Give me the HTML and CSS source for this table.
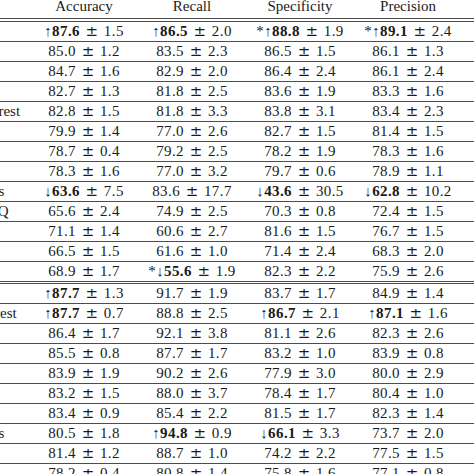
FILE: index.html
```html
<!DOCTYPE html>
<html lang="en">
<head>
<meta charset="utf-8">
<title>Results table</title>
<link rel="stylesheet" href="styles.css">
</head>
<body>
<div class="tbl">
  <div class="row head"><div class="lab"></div><div class="c">Accuracy</div><div class="c">Recall</div><div class="c">Specificity</div><div class="c">Precision</div><div></div></div>

  <div class="row"><div class="lab"></div><div class="c">↑<b>87.6</b> <span class="pm">±</span> 1.5</div><div class="c">↑<b>86.5</b> <span class="pm">±</span> 2.0</div><div class="c">*↑<b>88.8</b> <span class="pm">±</span> 1.9</div><div class="c">*↑<b>89.1</b> <span class="pm">±</span> 2.4</div><div></div></div>
  <div class="row"><div class="lab"></div><div class="c">85.0 <span class="pm">±</span> 1.2</div><div class="c">83.5 <span class="pm">±</span> 2.3</div><div class="c">86.5 <span class="pm">±</span> 1.5</div><div class="c">86.1 <span class="pm">±</span> 1.3</div><div></div></div>
  <div class="row"><div class="lab"></div><div class="c">84.7 <span class="pm">±</span> 1.6</div><div class="c">82.9 <span class="pm">±</span> 2.0</div><div class="c">86.4 <span class="pm">±</span> 2.4</div><div class="c">86.1 <span class="pm">±</span> 2.4</div><div></div></div>
  <div class="row"><div class="lab"></div><div class="c">82.7 <span class="pm">±</span> 1.3</div><div class="c">81.8 <span class="pm">±</span> 2.5</div><div class="c">83.6 <span class="pm">±</span> 1.9</div><div class="c">83.3 <span class="pm">±</span> 1.6</div><div></div></div>
  <div class="row"><div class="lab">Random Forest</div><div class="c">82.8 <span class="pm">±</span> 1.5</div><div class="c">81.8 <span class="pm">±</span> 3.3</div><div class="c">83.8 <span class="pm">±</span> 3.1</div><div class="c">83.4 <span class="pm">±</span> 2.3</div><div></div></div>
  <div class="row"><div class="lab"></div><div class="c">79.9 <span class="pm">±</span> 1.4</div><div class="c">77.0 <span class="pm">±</span> 2.6</div><div class="c">82.7 <span class="pm">±</span> 1.5</div><div class="c">81.4 <span class="pm">±</span> 1.5</div><div></div></div>
  <div class="row"><div class="lab"></div><div class="c">78.7 <span class="pm">±</span> 0.4</div><div class="c">79.2 <span class="pm">±</span> 2.5</div><div class="c">78.2 <span class="pm">±</span> 1.9</div><div class="c">78.3 <span class="pm">±</span> 1.6</div><div></div></div>
  <div class="row"><div class="lab"></div><div class="c">78.3 <span class="pm">±</span> 1.6</div><div class="c">77.0 <span class="pm">±</span> 3.2</div><div class="c">79.7 <span class="pm">±</span> 0.6</div><div class="c">78.9 <span class="pm">±</span> 1.1</div><div></div></div>
  <div class="row"><div class="lab">Naive Bayes</div><div class="c">↓<b>63.6</b> <span class="pm">±</span> 7.5</div><div class="c">83.6 <span class="pm">±</span> 17.7</div><div class="c">↓<b>43.6</b> <span class="pm">±</span> 30.5</div><div class="c">↓<b>62.8</b> <span class="pm">±</span> 10.2</div><div></div></div>
  <div class="row"><div class="lab">Fuzzy GLVQ</div><div class="c">65.6 <span class="pm">±</span> 2.4</div><div class="c">74.9 <span class="pm">±</span> 2.5</div><div class="c">70.3 <span class="pm">±</span> 0.8</div><div class="c">72.4 <span class="pm">±</span> 1.5</div><div></div></div>
  <div class="row"><div class="lab"></div><div class="c">71.1 <span class="pm">±</span> 1.4</div><div class="c">60.6 <span class="pm">±</span> 2.7</div><div class="c">81.6 <span class="pm">±</span> 1.5</div><div class="c">76.7 <span class="pm">±</span> 1.5</div><div></div></div>
  <div class="row"><div class="lab"></div><div class="c">66.5 <span class="pm">±</span> 1.5</div><div class="c">61.6 <span class="pm">±</span> 1.0</div><div class="c">71.4 <span class="pm">±</span> 2.4</div><div class="c">68.3 <span class="pm">±</span> 2.0</div><div></div></div>
  <div class="row split"><div class="lab"></div><div class="c">68.9 <span class="pm">±</span> 1.7</div><div class="c">*↓<b>55.6</b> <span class="pm">±</span> 1.9</div><div class="c">82.3 <span class="pm">±</span> 2.2</div><div class="c">75.9 <span class="pm">±</span> 2.6</div><div></div></div>

  <div class="row"><div class="lab"></div><div class="c">↑<b>87.7</b> <span class="pm">±</span> 1.3</div><div class="c">91.7 <span class="pm">±</span> 1.9</div><div class="c">83.7 <span class="pm">±</span> 1.7</div><div class="c">84.9 <span class="pm">±</span> 1.4</div><div></div></div>
  <div class="row"><div class="lab">Random forest</div><div class="c">↑<b>87.7</b> <span class="pm">±</span> 0.7</div><div class="c">88.8 <span class="pm">±</span> 2.5</div><div class="c">↑<b>86.7</b> <span class="pm">±</span> 2.1</div><div class="c">↑<b>87.1</b> <span class="pm">±</span> 1.6</div><div></div></div>
  <div class="row"><div class="lab"></div><div class="c">86.4 <span class="pm">±</span> 1.7</div><div class="c">92.1 <span class="pm">±</span> 3.8</div><div class="c">81.1 <span class="pm">±</span> 2.6</div><div class="c">82.3 <span class="pm">±</span> 2.6</div><div></div></div>
  <div class="row"><div class="lab"></div><div class="c">85.5 <span class="pm">±</span> 0.8</div><div class="c">87.7 <span class="pm">±</span> 1.7</div><div class="c">83.2 <span class="pm">±</span> 1.0</div><div class="c">83.9 <span class="pm">±</span> 0.8</div><div></div></div>
  <div class="row"><div class="lab"></div><div class="c">83.9 <span class="pm">±</span> 1.9</div><div class="c">90.2 <span class="pm">±</span> 2.6</div><div class="c">77.9 <span class="pm">±</span> 3.0</div><div class="c">80.0 <span class="pm">±</span> 2.9</div><div></div></div>
  <div class="row"><div class="lab"></div><div class="c">83.2 <span class="pm">±</span> 1.5</div><div class="c">88.0 <span class="pm">±</span> 3.7</div><div class="c">78.4 <span class="pm">±</span> 1.7</div><div class="c">80.4 <span class="pm">±</span> 1.0</div><div></div></div>
  <div class="row"><div class="lab"></div><div class="c">83.4 <span class="pm">±</span> 0.9</div><div class="c">85.4 <span class="pm">±</span> 2.2</div><div class="c">81.5 <span class="pm">±</span> 1.7</div><div class="c">82.3 <span class="pm">±</span> 1.4</div><div></div></div>
  <div class="row"><div class="lab">Naive Bayes</div><div class="c">80.5 <span class="pm">±</span> 1.8</div><div class="c">↑<b>94.8</b> <span class="pm">±</span> 0.9</div><div class="c">↓<b>66.1</b> <span class="pm">±</span> 3.3</div><div class="c">73.7 <span class="pm">±</span> 2.0</div><div></div></div>
  <div class="row"><div class="lab"></div><div class="c">81.4 <span class="pm">±</span> 1.2</div><div class="c">88.7 <span class="pm">±</span> 1.0</div><div class="c">74.2 <span class="pm">±</span> 2.2</div><div class="c">77.5 <span class="pm">±</span> 1.5</div><div></div></div>
  <div class="row"><div class="lab"></div><div class="c">78.2 <span class="pm">±</span> 0.4</div><div class="c">80.8 <span class="pm">±</span> 1.4</div><div class="c">75.8 <span class="pm">±</span> 1.6</div><div class="c">77.1 <span class="pm">±</span> 0.8</div><div></div></div>
</div>
</body>
</html>
```

FILE: styles.css
```css
html, body {
  margin: 0;
  padding: 0;
  overflow: hidden;
  background: #ffffff;
}

body {
  font-family: "Liberation Serif", "Times New Roman", serif;
  font-size: 15px;
  color: #1a1a1a;
}

.tbl {
  width: 546px;
  margin-left: -72px;
  margin-top: -3px;
}

.row {
  display: grid;
  grid-template-columns: 102px repeat(4, 108px) 1fr;
  height: 19px;
  line-height: 19px;
  border-bottom: 1px solid #4d4d4d;
}

.row.head {
  padding-bottom: 2px;
  border-bottom: 4px double #4d4d4d;
}

.row.split {
  border-bottom: 3px double #4d4d4d;
}

.lab {
  white-space: nowrap;
}

.c {
  text-align: center;
  white-space: nowrap;
  letter-spacing: 0.4px;
  word-spacing: 1.5px;
}

.head .c {
  letter-spacing: 0;
  word-spacing: 0;
}

.c b {
  font-weight: 700;
}

.pm {
  font-family: "DejaVu Serif", "Liberation Serif", serif;
  font-size: 15px;
  letter-spacing: 0;
}
```
